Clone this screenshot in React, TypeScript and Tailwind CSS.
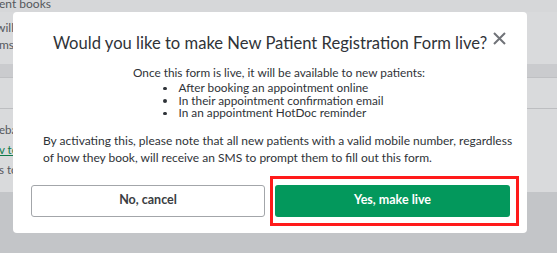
const font = { fontFamily: 'Lato, "Noto Sans", sans-serif' };

function CloseIcon() {
  return (
    <svg className="w-[13px] h-[13px]" viewBox="0 0 13 13" fill="none">
      <path d="M1 1l11 11M12 1L1 12" stroke="#707378" strokeWidth="2" />
    </svg>
  );
}

function Bullet({ children }: { children: React.ReactNode }) {
  return (
    <li className="flex items-center h-[12.5px]">
      <span className="w-[3.5px] h-[3.5px] mr-[12px] rounded-full bg-[#2f3338] shrink-0" />
      <span>{children}</span>
    </li>
  );
}

function Backdrop() {
  return (
    <div className="flex flex-col w-full h-full text-[12px] text-[#55585c] whitespace-nowrap" style={font}>
      {/* top strip */}
      <div className="h-[12px] bg-[#d6d7d9] leading-[7px] -ml-[1px] overflow-hidden">ent books</div>
      <div className="h-[52px] bg-[#d9dadc] flex flex-col pt-[9px] gap-[4px]">
        <div className="leading-[13px] -ml-[4px]">will be</div>
        <div className="leading-[13px] -ml-[1px]">ms</div>
      </div>
      <div className="h-[14px] bg-[#cacbce] border-b border-[#bfc0c3]" />
      <div className="h-[31px] bg-[#d9dadc] border-b border-[#bdbec1]" />
      <div className="h-[83px] bg-[#d9dadc] flex flex-col pt-[14px] gap-[7px] text-[11.5px]">
        <div className="leading-[13px] -ml-[1px]">ebate</div>
        <div className="leading-[13px] -ml-[1px] text-[#0f7a4a] underline">v to</div>
        <div className="leading-[13px] -ml-[1px]">s to</div>
      </div>
      <div className="flex-1 bg-[#c3c5c8]" />
    </div>
  );
}

export default function App() {
  return (
    <div className="relative w-[557px] h-[253px] overflow-hidden bg-[#d9dadc]">
      <Backdrop />

      {/* modal */}
      <div
        className="absolute left-[13px] top-[12px] w-[514px] h-[221px] bg-white rounded-[4px] flex flex-col text-[#2f3338]"
        style={font}
      >
        <button className="absolute right-[21px] top-[20px]">
          <CloseIcon />
        </button>

        <h2 className="mt-[21px] text-center text-[16.6px] leading-[20px] whitespace-nowrap">
          Would you like to make New Patient Registration Form live?
        </h2>

        <div className="mt-[13px] pl-[18px] text-center text-[11.8px] leading-[14px]">
          Once this form is live, it will be available to new patients:
        </div>
        <ul className="mt-[2px] pl-[150px] text-[11.8px] leading-[12.5px]">
          <Bullet>After booking an appointment online</Bullet>
          <Bullet>In their appointment confirmation email</Bullet>
          <Bullet>In an appointment HotDoc reminder</Bullet>
        </ul>

        <p className="mt-[12px] pl-[30px] text-[12px] leading-[17px] whitespace-nowrap">
          By activating this, please note that all new patients with a valid mobile number, regardless
          <br />
          of how they book, will receive an SMS to prompt them to fill out this form.
        </p>

        <div className="mt-[19px] flex gap-[10px] pl-[18px]">
          <button className="w-[234px] h-[32px] rounded-[3px] border border-[#a3a6aa] bg-white text-[12.5px] font-bold text-[#3a3d42]">
            No, cancel
          </button>
          <button className="w-[235px] h-[32px] rounded-[3px] bg-[#03985c] text-[12.5px] font-bold text-white">
            Yes, make live
          </button>
        </div>
      </div>

      {/* highlight annotation */}
      <div className="absolute left-[270px] top-[176px] w-[249px] h-[50px] border-[3px] border-[#ff1a1a]" />
    </div>
  );
}
